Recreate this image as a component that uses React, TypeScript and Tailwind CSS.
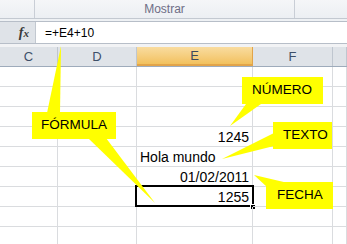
import React from "react";

// column layout of the visible sheet ---------------
const columns = [
  { label: "C", width: "w-[58px]" },
  { label: "D", width: "w-[79px]" },
  { label: "E", width: "w-[116px]", selected: true },
  { label: "F", width: "w-[80px]" },
  { label: "", width: "flex-1" },
];

// only column E has values
const rows: { e?: string; align?: "left" | "right"; active?: boolean }[] = [
  {},
  {},
  {},
  { e: "1245", align: "right" },
  { e: "Hola mundo", align: "left" },
  { e: "01/02/2011", align: "right" },
  { e: "1255", align: "right", active: true },
  {},
  {},
];

const cellFont = { fontFamily: '"Liberation Sans", Arial, sans-serif' };

export default function App() {
  return (
    <div
      className="relative w-[347px] h-[244px] overflow-hidden bg-white"
      style={cellFont}
    >
      {/* RIBBON GROUP LABEL */}
      <div className="flex h-[19px] bg-gradient-to-b from-[#f5f6f8] to-[#eceff3] border-b border-[#c3c9d1]">
        <div className="w-[35px] border-r border-[#c9ced6]" />
        <div className="w-[260px] border-r border-[#c9ced6] flex items-center justify-center text-[12px] text-[#6e6e86]">
          Mostrar
        </div>
        <div className="flex-1" />
      </div>
      <div className="h-[3px] bg-[#eef1f4] border-b border-[#b7bec8]" />

      {/* FORMULA BAR */}
      <div className="flex h-[22px] border-b border-[#b7bec8]">
        <div className="w-[36px] bg-[#dfe3e8] border-r border-[#c2c8d0] flex items-center justify-end pr-[6px]">
          <span
            className="italic font-bold text-[14px] text-[#3a3a3a] leading-none"
            style={{ fontFamily: '"Liberation Serif", serif' }}
          >
            f<span className="text-[11px]">x</span>
          </span>
        </div>
        <div className="flex-1 flex items-center pl-[9px] text-[12px] text-black">
          =+E4+10
        </div>
      </div>
      <div className="h-[3px] bg-[#f2f3f5]" />

      {/* COLUMN HEADERS */}
      <div className="flex h-[20px] border-b border-[#9eabbb]">
        {columns.map((c, i) => (
          <div
            key={i}
            className={`${c.width} flex items-center justify-center text-[13px] border-r ${
              c.selected
                ? "bg-gradient-to-b from-[#f9dc9f] to-[#f2c15d] border-[#e2a449] border-b-2 text-[#3d4a5c]"
                : "bg-[#dfe3e8] border-[#bfc6cf] text-[#3d4f68]"
            }`}
          >
            {c.label}
          </div>
        ))}
      </div>

      {/* GRID */}
      {rows.map((r, i) => (
        <div key={i} className="flex h-[20px]">
          {columns.map((c, j) => (
            <div
              key={j}
              className={`${c.width} relative border-r border-b border-[#dadcdf] flex items-end pb-[2px] text-[14px] text-black leading-none ${
                r.align === "right" ? "justify-end pr-[3px]" : "pl-[3px]"
              }`}
            >
              {c.selected && r.e}
              {c.selected && r.active && (
                <>
                  <div className="absolute left-[-2px] top-[-2px] w-[119px] h-[22px] border-2 border-black" />
                  <div className="absolute right-[-4px] bottom-[-4px] w-[6px] h-[6px] bg-black border border-white" />
                </>
              )}
            </div>
          ))}
        </div>
      ))}

      {/* CALLOUT POINTERS */}
      <svg
        className="absolute left-0 top-0 pointer-events-none"
        width="347"
        height="244"
        viewBox="0 0 347 244"
      >
        <polygon points="47,113 60,113 61,46" fill="#ffff00" />
        <polygon points="88,138 106,138 155,203" fill="#ffff00" />
        <polygon points="246,104 261,104 230,126" fill="#ffff00" />
        <polygon points="274,133 274,146 222,159" fill="#ffff00" />
        <polygon points="254,175 288,183 267,187" fill="#ffff00" />
      </svg>

      {/* CALLOUT BOXES */}
      <div className="absolute left-[32px] top-[112px] w-[84px] h-[27px] bg-[#ffff00] flex items-center justify-center text-[13.5px] text-black">
        FÓRMULA
      </div>
      <div className="absolute left-[242px] top-[77px] w-[81px] h-[27px] bg-[#ffff00] flex items-center pl-[10px] text-[13.5px] text-black">
        NÚMERO
      </div>
      <div className="absolute left-[273px] top-[122px] w-[59px] h-[27px] bg-[#ffff00] flex items-center pl-[10px] text-[13.5px] text-black">
        TEXTO
      </div>
      <div className="absolute left-[266px] top-[182px] w-[67px] h-[27px] bg-[#ffff00] flex items-center pl-[11px] text-[13.5px] text-black">
        FECHA
      </div>
    </div>
  );
}
